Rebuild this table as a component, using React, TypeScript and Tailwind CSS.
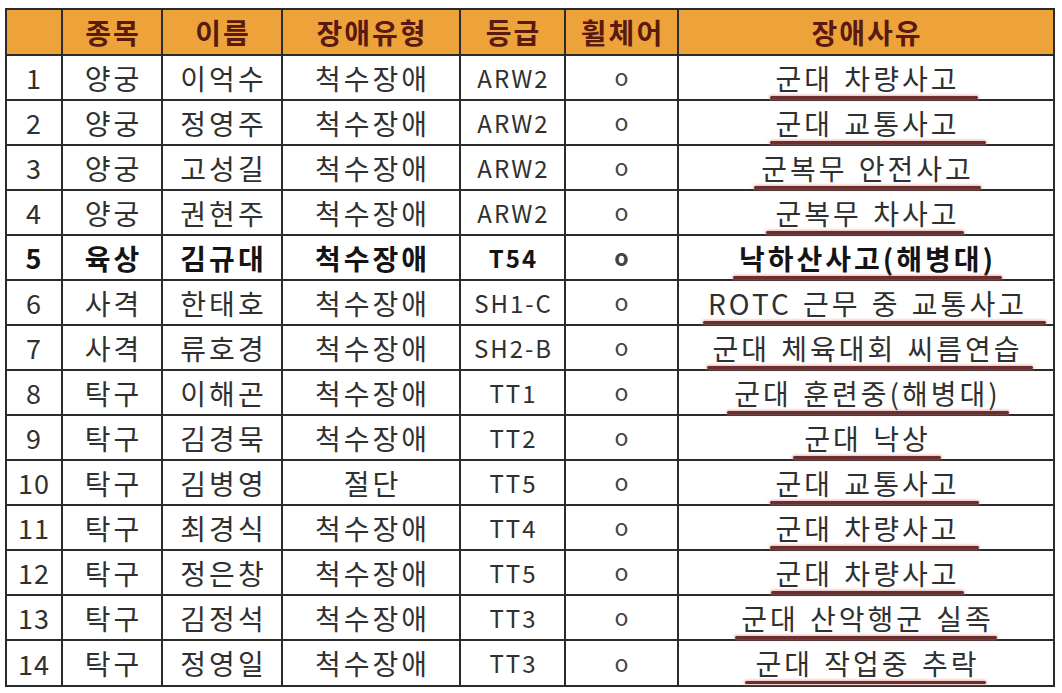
import React from 'react';

type Row = {
  no: number;
  sport: string;
  name: string;
  kind: string;
  grade: string;
  reason: string;
  ul: string;
  bold?: boolean;
};

// 장애사유 underline reach past the text differs per row
const rows: Row[] = [
  { no: 1, sport: '양궁', name: '이억수', kind: '척수장애', grade: 'ARW2', reason: '군대 차량사고', ul: '-left-[3px] -right-[19px]' },
  { no: 2, sport: '양궁', name: '정영주', kind: '척수장애', grade: 'ARW2', reason: '군대 교통사고', ul: '-left-[3px] -right-[27px]' },
  { no: 3, sport: '양궁', name: '고성길', kind: '척수장애', grade: 'ARW2', reason: '군복무 안전사고', ul: '-left-[4px] -right-[7px]' },
  { no: 4, sport: '양궁', name: '권현주', kind: '척수장애', grade: 'ARW2', reason: '군복무 차사고', ul: '-left-[7px] -right-[5px]' },
  { no: 5, sport: '육상', name: '김규대', kind: '척수장애', grade: 'T54', reason: '낙하산사고(해병대)', ul: '-left-[3px] -right-[6px]', bold: true },
  { no: 6, sport: '사격', name: '한태호', kind: '척수장애', grade: 'SH1-C', reason: 'ROTC 근무 중 교통사고', ul: '-left-[2px] -right-[19px]' },
  { no: 7, sport: '사격', name: '류호경', kind: '척수장애', grade: 'SH2-B', reason: '군대 체육대회 씨름연습', ul: '-left-[2px] -right-[10px]' },
  { no: 8, sport: '탁구', name: '이해곤', kind: '척수장애', grade: 'TT1', reason: '군대 훈련중(해병대)', ul: '-left-[4px] -right-[8px]' },
  { no: 9, sport: '탁구', name: '김경묵', kind: '척수장애', grade: 'TT2', reason: '군대 낙상', ul: '-left-[8px] -right-[10px]' },
  { no: 10, sport: '탁구', name: '김병영', kind: '절단', grade: 'TT5', reason: '군대 교통사고', ul: '-left-[3px] -right-[20px]' },
  { no: 11, sport: '탁구', name: '최경식', kind: '척수장애', grade: 'TT4', reason: '군대 차량사고', ul: '-left-[3px] -right-[20px]' },
  { no: 12, sport: '탁구', name: '정은창', kind: '척수장애', grade: 'TT5', reason: '군대 차량사고', ul: '-left-[2px] -right-[5px]' },
  { no: 13, sport: '탁구', name: '김정석', kind: '척수장애', grade: 'TT3', reason: '군대 산악행군 실족', ul: '-left-[3px] -right-[3px]' },
  { no: 14, sport: '탁구', name: '정영일', kind: '척수장애', grade: 'TT3', reason: '군대 작업중 추락', ul: '-left-[8px] -right-[7px]' },
];

const headers = ['', '종목', '이름', '장애유형', '등급', '휠체어', '장애사유'];

const gridCols = 'grid grid-cols-[56px_100px_120px_178px_105px_113px_1fr]';
const cell = 'flex items-center justify-center border-r-2 border-[#2b2b2b]';

export default function App() {
  return (
    <div
      className="w-[1062px] h-[693px] bg-white pt-[8px] pl-[5px] overflow-hidden"
      style={{ fontFamily: '"Noto Sans CJK KR", "Noto Sans", sans-serif' }}
    >
      <div className="w-[1050px] border-2 border-[#2b2b2b]">
        {/* header */}
        <div className={`${gridCols} h-[46px] border-b-2 border-[#2b2b2b] bg-[#eea33a]`}>
          {headers.map((h, i) => (
            <div
              key={i}
              className={`${i < 6 ? cell : 'flex items-center justify-center'} text-[28px] leading-none font-bold tracking-[2px] pl-[2px] text-[#5a1a10]`}
            >
              {h}
            </div>
          ))}
        </div>

        {rows.map((r, idx) => {
          const last = idx === rows.length - 1;
          const tone = r.bold ? 'font-bold text-[#141414]' : 'text-[#303030]';
          return (
            <div
              key={r.no}
              className={`${gridCols} ${last ? 'h-[44px]' : 'h-[45px] border-b-2 border-[#2b2b2b]'} text-[28px] leading-none ${tone}`}
            >
              <div className={`${cell} text-[27px] tracking-[1px]`}>{r.no}</div>
              <div className={`${cell} tracking-[3px] pl-[3px]`}>{r.sport}</div>
              <div className={`${cell} tracking-[3px] pl-[3px]`}>{r.name}</div>
              <div className={`${cell} tracking-[3px] pl-[3px]`}>{r.kind}</div>
              <div className={`${cell} text-[24px] tracking-[2px] pl-[2px]`}>{r.grade}</div>
              <div className={`${cell} text-[23px] pb-[2px] text-[#444]`}>o</div>
              <div className="flex items-center justify-center">
                <span className="relative tracking-[3px] [word-spacing:2px] pl-[3px]">
                  {r.reason}
                  <span
                    className={`absolute ${r.ul} -bottom-[7px] h-[3px] rounded-full bg-[#6e2e2e] shadow-[0_0_3px_1px_rgba(214,120,120,0.55)]`}
                  />
                </span>
              </div>
            </div>
          );
        })}
      </div>
    </div>
  );
}
